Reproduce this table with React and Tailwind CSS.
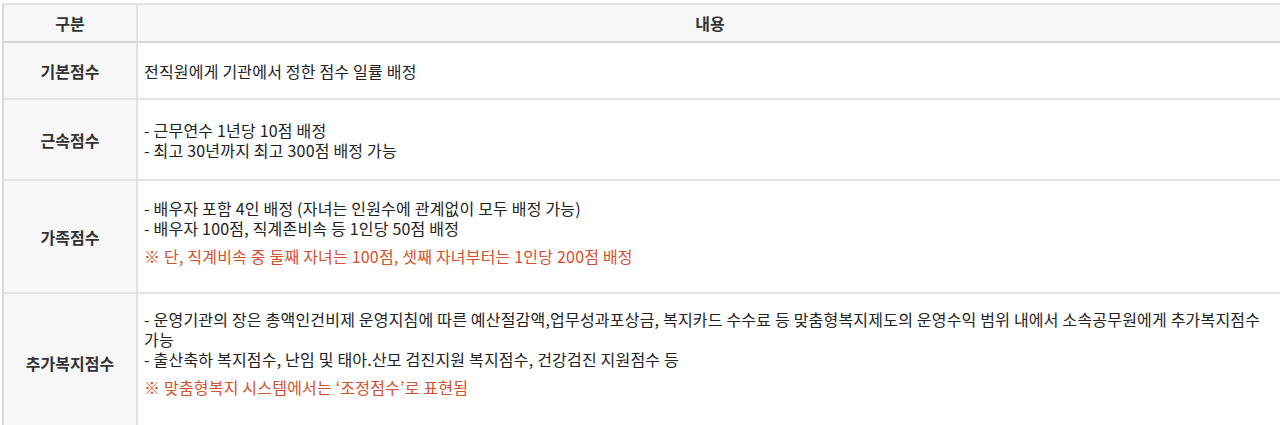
// App.jsx
const rows = [
  {
    label: "기본점수",
    h: "h-[57px]",
    cell: "align-middle",
    lines: ["전직원에게 기관에서 정한 점수 일률 배정"],
  },
  {
    label: "근속점수",
    h: "h-[81px]",
    cell: "align-middle",
    lines: ["- 근무연수 1년당 10점 배정", "- 최고 30년까지 최고 300점 배정 가능"],
  },
  {
    label: "가족점수",
    h: "h-[113px]",
    cell: "align-middle",
    lines: [
      "- 배우자 포함 4인 배정 (자녀는 인원수에 관계없이 모두 배정 가능)",
      "- 배우자 100점, 직계존비속 등 1인당 50점 배정",
    ],
    note: "※ 단, 직계비속 중 둘째 자녀는 100점, 셋째 자녀부터는 1인당 200점 배정",
  },
  {
    label: "추가복지점수",
    h: "h-[140px]",
    cell: "align-top pt-[15px]",
    lines: [
      "- 운영기관의 장은 총액인건비제 운영지침에 따른 예산절감액,업무성과포상금, 복지카드 수수료 등 맞춤형복지제도의 운영수익 범위 내에서 소속공무원에게 추가복지점수 가능",
      "- 출산축하 복지점수, 난임 및 태아.산모 검진지원 복지점수, 건강검진 지원점수 등",
    ],
    note: "※ 맞춤형복지 시스템에서는 ‘조정점수’로 표현됨",
  },
];

export default function App() {
  return (
    <div
      className="w-[1280px] h-[425px] overflow-hidden bg-white pt-[3px] pl-[2px] text-[#333]"
      style={{ fontFamily: '"Noto Sans CJK KR", "Noto Sans", sans-serif' }}
    >
      <table className="w-[1290px] border-separate border-spacing-0 table-fixed">
        <colgroup>
          <col className="w-[135px]" />
          <col />
        </colgroup>
        <thead>
          <tr className="h-[40px]">
            <th className="bg-[#f7f7f7] border-t-2 border-l-2 border-b-2 border-r border-t-[#e3e3e3] border-l-[#d9d9d9] border-b-[#d3d3d3] border-r-[#e3e3e3] text-[16px] font-bold text-center align-middle">
              구분
            </th>
            <th className="bg-[#f7f7f7] border-t-2 border-b-2 border-l border-t-[#e3e3e3] border-b-[#d3d3d3] border-l-[#e3e3e3] text-[16px] font-bold text-center align-middle pr-[10px]">
              내용
            </th>
          </tr>
        </thead>
        <tbody>
          {rows.map((r) => (
            <tr key={r.label} className={r.h}>
              <td className="bg-[#f7f7f7] border-l-2 border-l-[#d9d9d9] border-r border-r-[#e0e0e0] border-b-2 border-b-[#e3e3e3] text-[16px] font-bold text-center align-middle">
                {r.label}
              </td>
              <td className={`${r.cell} border-l border-l-[#e0e0e0] border-b-2 border-b-[#e3e3e3] pl-[6px] pr-[14px] text-[16px] leading-[20px] tracking-[0.2px] text-[#222]`}>
                {r.lines.map((l) => (
                  <div key={l}>{l}</div>
                ))}
                {r.note && (
                  <div className="mt-[8px] mb-[10px] text-[#d4512f]">{r.note}</div>
                )}
              </td>
            </tr>
          ))}
        </tbody>
      </table>
    </div>
  );
}
